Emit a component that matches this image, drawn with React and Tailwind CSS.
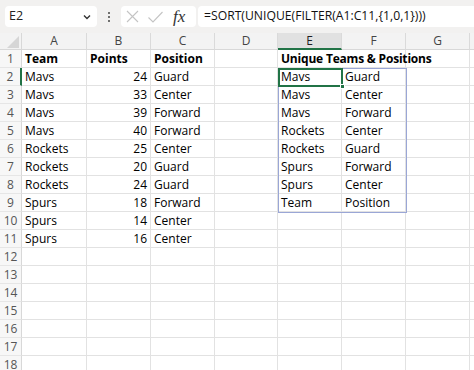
import React from "react";

const COLS = [
  { l: "A", w: 65 },
  { l: "B", w: 64 },
  { l: "C", w: 64 },
  { l: "D", w: 63 },
  { l: "E", w: 64 },
  { l: "F", w: 64 },
  { l: "G", w: 64 },
  { l: "", w: 20 },
];

const data = {
  1: { A: ["Team", "b"], B: ["Points", "b"], C: ["Position", "b"], E: ["Unique Teams & Positions", "bo"] },
  2: { A: ["Mavs"], B: ["24", "r"], C: ["Guard"], E: ["Mavs"], F: ["Guard"] },
  3: { A: ["Mavs"], B: ["33", "r"], C: ["Center"], E: ["Mavs"], F: ["Center"] },
  4: { A: ["Mavs"], B: ["39", "r"], C: ["Forward"], E: ["Mavs"], F: ["Forward"] },
  5: { A: ["Mavs"], B: ["40", "r"], C: ["Forward"], E: ["Rockets"], F: ["Center"] },
  6: { A: ["Rockets"], B: ["25", "r"], C: ["Center"], E: ["Rockets"], F: ["Guard"] },
  7: { A: ["Rockets"], B: ["20", "r"], C: ["Guard"], E: ["Spurs"], F: ["Forward"] },
  8: { A: ["Rockets"], B: ["24", "r"], C: ["Guard"], E: ["Spurs"], F: ["Center"] },
  9: { A: ["Spurs"], B: ["18", "r"], C: ["Forward"], E: ["Team"], F: ["Position"] },
  10: { A: ["Spurs"], B: ["14", "r"], C: ["Center"] },
  11: { A: ["Spurs"], B: ["16", "r"], C: ["Center"] },
};

const rows = Array.from({ length: 18 }, (_, i) => i + 1);

function Cell({ col, row }) {
  const d = data[row] && data[row][col.l];
  let cls = "h-[18px] shrink-0 border-r border-b border-[#e2e2e2] text-[12px] leading-[18px] text-black whitespace-nowrap px-[3px]";
  if (d && d[1] === "r") cls += " text-right";
  if (d && (d[1] === "b" || d[1] === "bo")) cls += " font-bold";
  if (d && d[1] === "bo") cls += " overflow-visible relative z-10 border-r-transparent tracking-[-0.2px]";
  else cls += " overflow-hidden";
  return (
    <div className={cls} style={{ width: col.w }}>
      {d ? d[0] : ""}
    </div>
  );
}

export default function App() {
  return (
    <div
      className="w-[474px] h-[370px] overflow-hidden bg-white relative"
      style={{ fontFamily: '"Open Sans", "Noto Sans", sans-serif' }}
    >
      {/* top formula bar */}
      <div className="h-[33px] bg-[#f2f1f0] flex items-start pt-[6px] pl-[5px] gap-[2px]">
        <div className="w-[92px] h-[21px] bg-white rounded-[4px] flex items-center justify-between pl-[4px] pr-[4px]">
          <span className="text-[12.5px] text-[#222]">E2</span>
          <svg width="10" height="10" viewBox="0 0 10 10" className="mr-[1px]">
            <path d="M2 3.5 L5 6.5 L8 3.5" fill="none" stroke="#333" strokeWidth="1.4" />
          </svg>
        </div>
        <div className="w-[20px] h-[21px] flex flex-col items-center justify-center gap-[2px]">
          <div className="w-[2px] h-[2px] bg-[#444] rounded-full"></div>
          <div className="w-[2px] h-[2px] bg-[#444] rounded-full"></div>
          <div className="w-[2px] h-[2px] bg-[#444] rounded-full"></div>
        </div>
        <div className="w-[75px] h-[21px] bg-white rounded-[4px] flex items-center pl-[4px] gap-[7px]">
          <svg width="15" height="15" viewBox="0 0 15 15">
            <path d="M2 2 L13 13 M13 2 L2 13" stroke="#c4c4c4" strokeWidth="1.1" />
          </svg>
          <svg width="17" height="14" viewBox="0 0 17 14">
            <path d="M1.5 7.5 L6 12 L15.5 2" fill="none" stroke="#c4c4c4" strokeWidth="1.1" />
          </svg>
          <span className="ml-[2px] text-[17px] leading-[17px] italic text-[#333]" style={{ fontFamily: '"Liberation Serif", serif' }}>
            fx
          </span>
        </div>
        <div className="flex-1 h-[21px] bg-white rounded-l-[4px] flex items-center pl-[6px]">
          <span className="text-[12.2px] text-[#111] whitespace-nowrap">=SORT(UNIQUE(FILTER(A1:C11,{"{"}1,0,1{"}"})))</span>
        </div>
      </div>

      {/* grid */}
      <div className="relative">
        {/* column header */}
        <div className="flex h-[17px]">
          <div className="w-[22px] shrink-0 bg-[#f3f3f3] border-r border-b border-[#d8d8d8] relative">
            <svg width="22" height="17" viewBox="0 0 22 17" className="absolute left-0 top-0">
              <path d="M19 3 L19 15 L7 15 Z" fill="#d6d6d6" />
            </svg>
          </div>
          {COLS.map((c) => (
            <div
              key={c.l + "h"}
              className={
                "shrink-0 text-center text-[12px] leading-[16px] border-r border-[#dadada] " +
                (c.l === "E"
                  ? "bg-[#e1e1e1] border-b-2 border-b-[#217346] text-[#1f1f1f]"
                  : "bg-[#f3f3f3] border-b border-b-[#d8d8d8] text-[#444]")
              }
              style={{ width: c.w }}
            >
              {c.l}
            </div>
          ))}
        </div>

        {rows.map((r) => (
          <div key={r} className="flex">
            <div
              className={
                "w-[22px] h-[18px] shrink-0 bg-[#f7f7f7] text-[12px] leading-[18px] text-center text-[#555] border-b border-[#e6e6e6] " +
                (r === 2 ? "border-r-2 border-r-[#217346] bg-[#e9e9e9]" : "border-r border-r-[#d8d8d8]")
              }
            >
              {r}
            </div>
            {COLS.map((c) => (
              <Cell key={c.l + r} col={c} row={r} />
            ))}
          </div>
        ))}

        {/* spill range border E2:F9 */}
        <div className="absolute left-[278px] top-[35px] w-[129px] h-[145px] border border-[#9aa6d6] pointer-events-none"></div>
        {/* active cell E2 */}
        <div className="absolute left-[278px] top-[35px] w-[65px] h-[19px] border-2 border-[#217346] pointer-events-none">
          <div className="absolute right-[-4px] bottom-[-4px] w-[5px] h-[5px] bg-[#217346] border border-white"></div>
        </div>
      </div>
    </div>
  );
}
